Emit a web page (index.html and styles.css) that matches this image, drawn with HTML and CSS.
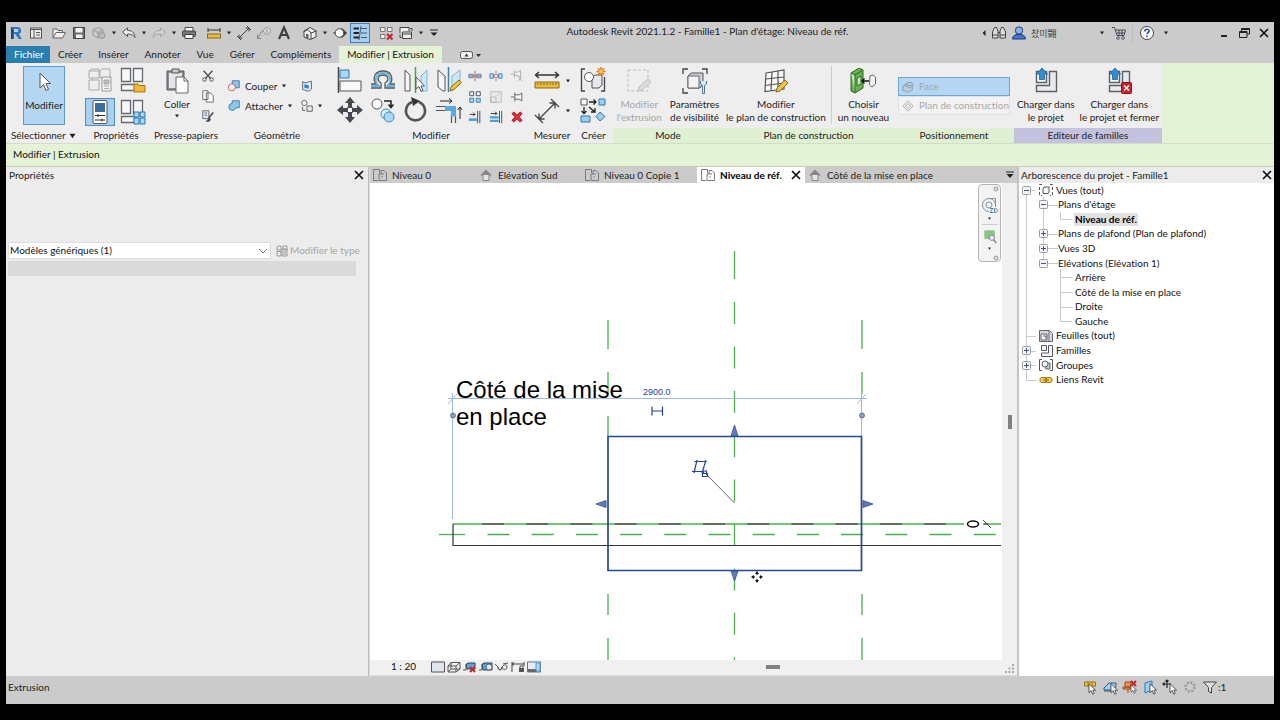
FILE: index.html
```html
<!DOCTYPE html>
<html lang="fr">
<head>
<meta charset="utf-8">
<title>Autodesk Revit 2021.1.2 - Famille1</title>
<link rel="stylesheet" href="styles.css">
</head>
<body>
<svg class="defs" aria-hidden="true">
  <symbol id="sheet" viewBox="0 0 14 12"><path d="M5 11.500H.5V.5H6.500V4M6 11.500V5h2V1.500h3l2.500 2.500v7.500zM9 7v1.500M8 5h3" fill="none" stroke="#777b80"/></symbol>
  <symbol id="house" viewBox="0 0 14 12"><path d="M7 .5L13 6.500H1z" fill="#83878b"/><path d="M4 6v5.500h6V6" fill="#e4e4e4" stroke="#83878b"/></symbol>
  <symbol id="arrow" viewBox="0 0 6 4"><path d="M1 .5h4L3 3.500z" fill="#222"/></symbol>
  <symbol id="cursor" viewBox="0 0 8 12"><path d="M1 .7v9l2.200-2 1.500 3.500 1.600-.8L4.800 7.200h2.800z" fill="#fff" stroke="#333" stroke-width=".8"/></symbol>
  <symbol id="cross" viewBox="0 0 10 10"><path d="M1 1l8 8M9 1L1 9" stroke="#111" stroke-width="1.700"/></symbol>
  <symbol id="plus" viewBox="0 0 9 9"><rect x=".5" y=".5" width="8" height="8" rx="1" fill="#f4f5f8" stroke="#9a9ea6"/><path d="M2 4.500h5M4.500 2v5" stroke="#44548a"/></symbol>
  <symbol id="minus" viewBox="0 0 9 9"><rect x=".5" y=".5" width="8" height="8" rx="1" fill="#f4f5f8" stroke="#9a9ea6"/><path d="M2 4.500h5" stroke="#44548a"/></symbol>
  <symbol id="load" viewBox="0 0 26 26"><path d="M16.500 3.500h7v20h-20v-6h13z" fill="#e8eaee" stroke="#5c6066" stroke-width="1.400"/><path d="M6 3.500H3.500v11h10v-11H12" fill="#fafafa" stroke="#5c6066" stroke-width="1.400"/><path d="M9 0l5.500 6h-3v5.500h-5V6h-3z" fill="#2f8fd6" stroke="#1c609e" stroke-width=".8"/></symbol>
</svg>
<div class="app">
  <header class="titlebar">
    <div class="quick">
      <button class="q" aria-label="Revit"><svg viewBox="0 0 16 16"><path d="M3 2h2.800v12H3z" fill="#174a7c"/><path d="M4 2h5.500a3.600 3.600 0 0 1 1.200 7L14 14h-3.300L7.300 9H6V7h3a1.500 1.500 0 0 0 0-3H4z" fill="#2a78bf"/></svg></button>
      <button class="q" aria-label="Accueil"><svg viewBox="0 0 16 16"><rect x="2.500" y="3" width="11" height="10" fill="#eee" stroke="#555"/><path d="M2 4.500h12M6 5v8M8 7.500h4M8 10h4" stroke="#555"/></svg></button>
      <button class="q gap3" aria-label="Ouvrir"><svg viewBox="0 0 16 16"><path d="M2 13V4h4l1 1.500h4.500V8M2 13l3-5.500h9.500L11.500 13z" fill="#eee" stroke="#666"/></svg></button>
      <button class="q" aria-label="Enregistrer"><svg viewBox="0 0 16 16"><path d="M2.500 2.500h11v11h-11z" fill="#666a70" stroke="#444"/><path d="M4.500 3h7v4.500h-7zM5 9.500h6.500V13H5z" fill="#f2f2f2"/></svg></button>
      <button class="q" aria-label="Synchroniser"><svg viewBox="0 0 16 16"><path d="M2 5l5-2.500L12 5v5l-5 3-5-3zM2 5l5 2.500L12 5M7 7.500V13" fill="#ccc" stroke="#999"/><circle cx="11" cy="10.500" r="3" fill="#bbb" stroke="#999"/></svg></button>
      <button class="qd" aria-label="Options"><svg><use href="#arrow"/></svg></button>
      <button class="q" aria-label="Annuler"><svg viewBox="0 0 16 16"><path d="M1.500 7l5-4v2.500c4 0 7 1.500 7.500 7-2-3-4-3.500-7.500-3.500v2.500z" fill="#eee" stroke="#555"/></svg></button>
      <button class="qd" aria-label="Liste annuler"><svg><use href="#arrow"/></svg></button>
      <button class="q" aria-label="Rétablir"><svg viewBox="0 0 16 16"><path d="M14.500 7l-5-4v2.500c-4 0-7 1.500-7.500 7 2-3 4-3.500 7.500-3.500v2.500z" fill="#d2d2d2" stroke="#a2a2a2"/></svg></button>
      <button class="qd" aria-label="Liste rétablir"><svg><use href="#arrow"/></svg></button>
      <button class="q" aria-label="Imprimer"><svg viewBox="0 0 16 16"><path d="M4 6V2.500h8V6" fill="#fff" stroke="#444"/><rect x="1.500" y="6" width="13" height="5.500" rx="1" fill="#777" stroke="#444"/><path d="M4 9.500h8v4H4z" fill="#fff" stroke="#444"/></svg></button>
      <button class="q sep" aria-label="Mesurer"><svg viewBox="0 0 16 16"><path d="M2 5h12M2 3v4M14 3v4" stroke="#333"/><rect x="1.500" y="9" width="13" height="4" fill="#eebc3a" stroke="#8d6a14"/></svg></button>
      <button class="qd" aria-label="Liste mesurer"><svg><use href="#arrow"/></svg></button>
      <button class="q" aria-label="Cote alignée"><svg viewBox="0 0 16 16"><path d="M3 13L13 3M9.500 3H13v3.500M3 9.500V13h3.500M1 11l4 4M11 1l4 4" fill="none" stroke="#444"/></svg></button>
      <button class="q" aria-label="Étiquette"><svg viewBox="0 0 16 16"><path d="M1.500 13.500L6 6M1.500 9.500v4H5M6 6h2" fill="none" stroke="#888"/><circle cx="11" cy="6" r="3.500" fill="#ddd" stroke="#999"/><path d="M11 4v4" stroke="#888"/></svg></button>
      <button class="q" aria-label="Texte"><svg viewBox="0 0 16 16"><path d="M3 14L8 2.500 13 14M5 10h6" fill="none" stroke="#3d4146" stroke-width="2.200"/></svg></button>
      <button class="q gap6" aria-label="Vue 3D"><svg viewBox="0 0 16 16"><path d="M2 6l6-3.500L14 6v6l-6 2.500L2 12z" fill="#eee" stroke="#444"/><path d="M1.500 7L6 4.500 9 8v6M9 8l5.500-2" fill="none" stroke="#444"/><path d="M4 9h2.500v4H4z" fill="#666"/></svg></button>
      <button class="qd" aria-label="Liste 3D"><svg><use href="#arrow"/></svg></button>
      <button class="q" aria-label="Coupe"><svg viewBox="0 0 16 16"><path d="M1 8h2M10 3.500L14.500 8 10 12.500z" fill="#333" stroke="#444"/><circle cx="7.500" cy="8" r="4.300" fill="#fff" stroke="#444"/></svg></button>
      <button class="q on" aria-label="Lignes fines"><svg viewBox="0 0 16 16"><path d="M1.500 3.500H7M1.500 8H7M1.500 12.500H7" stroke="#222" stroke-width="2"/><path d="M9 3.500h6M9 8h6M9 12.500h6M9 1L7 15" stroke="#245" stroke-width=".8"/></svg></button>
      <button class="q gap6" aria-label="Fermer les fenêtres"><svg viewBox="0 0 16 16"><path d="M2.500 2.500H7v4H2.500zM9.500 2.500H14v4H9.500zM2.500 9.500H7v4H2.500z" fill="#eee" stroke="#777"/><path d="M9 9l5.500 5.500M14.500 9L9 14.500" stroke="#c8232c" stroke-width="2"/></svg></button>
      <button class="q" aria-label="Changer de fenêtre"><svg viewBox="0 0 16 16"><path d="M2 8V2.500h9V6M4.500 7h9v6.500h-9zM4.500 9h9" fill="#eee" stroke="#444"/><path d="M2 9.500v3h1.500M12 3.500h2V6" fill="none" stroke="#444"/></svg></button>
      <button class="qd" aria-label="Liste fenêtres"><svg><use href="#arrow"/></svg></button>
      <button class="qd wide" aria-label="Personnaliser"><svg viewBox="0 0 8 8"><path d="M0 1h8" stroke="#222"/><path d="M.5 3.500h7L4 7z" fill="#222"/></svg></button>
    </div>
    <h1 class="title">Autodesk Revit 2021.1.2 - Famille1 - Plan d'étage: Niveau de réf.</h1>
    <div class="account">
      <button class="qd" aria-label="Réduire"><svg viewBox="0 0 6 6"><path d="M4.500 0v6L1.500 3z" fill="#222"/></svg></button>
      <button class="q" aria-label="Rechercher"><svg viewBox="0 0 16 16"><path d="M1.500 13V7l2-4.500h2L7 6v7zM14.500 13V7l-2-4.500h-2L9 6v7zM7 7.500h2M2 10h5M9 10h5" fill="#ddd" stroke="#444"/></svg></button>
      <button class="q" aria-label="Utilisateur"><svg viewBox="0 0 16 16"><circle cx="8" cy="5.500" r="3.700" fill="#8fb0e6" stroke="#1d3a86"/><path d="M1.500 14c0-3 2-4 4.500-4.500h4c2.500.5 4.500 1.500 4.500 4.500z" fill="#4a76c8" stroke="#1d3a86"/></svg></button>
      <span class="user">찼미翾</span>
      <button class="qd" aria-label="Compte"><svg><use href="#arrow"/></svg></button>
      <button class="q cart" aria-label="Boutique"><svg viewBox="0 0 16 16"><path d="M1 2.500h2.500L6 10.500h7l1.500-5.500H5M6 8h8M8 5v5M11 5v5" fill="none" stroke="#444a5a"/><circle cx="7" cy="13" r="1.300" fill="#fff" stroke="#444a5a"/><circle cx="12" cy="13" r="1.300" fill="#fff" stroke="#444a5a"/></svg></button>
      <button class="q help" aria-label="Aide"><svg viewBox="0 0 16 16"><circle cx="8" cy="8" r="6.500" fill="#fff" stroke="#444"/><path d="M5.800 6.500c0-3 4.400-3 4.400-.5 0 1.500-2.200 1.500-2.200 3.200M8 10.500v1.800" fill="none" stroke="#2453b0" stroke-width="1.600"/></svg></button>
      <button class="qd" aria-label="Liste aide"><svg><use href="#arrow"/></svg></button>
    </div>
    <div class="window">
      <button class="q" aria-label="Minimiser"><svg viewBox="0 0 16 16"><path d="M5 11h6" stroke="#111" stroke-width="1.800"/></svg></button>
      <button class="q" aria-label="Restaurer"><svg viewBox="0 0 16 16"><path d="M5.500 6V3.500h8V9H11" fill="none" stroke="#222"/><path d="M3.500 6.500h7.500v6H3.500zM3.500 7.500H11M5.500 4.500h8" fill="none" stroke="#222"/></svg></button>
      <button class="q" aria-label="Fermer"><svg viewBox="-3 -3 16 16"><use href="#cross" width="10" height="10"/></svg></button>
    </div>
  </header>

  <nav class="tabs">
    <button class="file">Fichier</button>
    <button>Créer</button>
    <button>Insérer</button>
    <button>Annoter</button>
    <button>Vue</button>
    <button>Gérer</button>
    <button>Compléments</button>
    <button class="current">Modifier | Extrusion</button>
    <button class="toggle" aria-label="Réduire le ruban"><svg viewBox="0 0 22 8"><rect x=".5" y=".5" width="12" height="7" rx="2" fill="#eee" stroke="#555"/><path d="M6.500 2.500l2 3h-4zM16 3h5l-2.500 3z" fill="#333"/></svg></button>
  </nav>

  <section class="ribbon">
    <div class="panel p-select">
      <div class="body"><button class="big on"><svg viewBox="0 0 26 26"><path d="M9 4v15l3.500-3.500 2.500 6 2.500-1-2.500-6h4.500z" fill="#fff" stroke="#555"/></svg>Modifier</button></div>
      <h2>Sélectionner <svg class="tri"><use href="#arrow"/></svg></h2>
    </div>
    <div class="panel p-props">
      <div class="body pair">
        <button class="icon" aria-label="Type"><svg viewBox="0 0 26 26"><path d="M2 4l3-2h7v9H2zM13 4l2-2h8v9H13zM2 13h10v10H2zM2 4h10M5 11v2" fill="#eee" stroke="#aaa"/><path d="M15 10h9v14h-9z" fill="#f4f4f4" stroke="#999"/><path d="M17 13h5v4h-5zM17 19h5M17 21.500h5" fill="#bbb" stroke="#aaa"/></svg></button>
        <button class="icon" aria-label="Catégorie"><svg viewBox="0 0 26 26"><path d="M1.500 1.500h9v13h-9zM13.500 1.500h9v13h-9zM1.500 17.500h13v6h-13z" fill="#f6f7f9" stroke="#666a70" stroke-width="1.300"/><path d="M14 17h4l1 1.500h6V25H14z" fill="#f0b834" stroke="#a87412"/></svg></button>
        <button class="icon on" aria-label="Propriétés"><svg viewBox="0 0 26 26"><rect x="6" y="1.500" width="14" height="23" rx="1" fill="#fff" stroke="#555"/><path d="M8 4h10v9H8z" fill="#3a6c9c"/><path d="M8 16.500h10M8 21h10M11 15v3M15 19.500v3" stroke="#333"/></svg></button>
        <button class="icon" aria-label="Types"><svg viewBox="0 0 26 26"><path d="M1.500 1.500h9v13h-9zM13.500 1.500h9v13h-9zM1.500 17.500h13v6h-13z" fill="#f6f7f9" stroke="#666a70" stroke-width="1.300"/><path d="M14 13h5v5h-5zM20 13h5v5h-5zM14 19h5v6h-5zM20 19h5v6h-5z" fill="#a9daf5" stroke="#2773ab"/></svg></button>
      </div>
      <h2>Propriétés</h2>
    </div>
    <div class="panel p-clip">
      <div class="body split">
        <button class="big"><svg viewBox="0 0 26 26"><path d="M3 3h17v19H3z" fill="#8a8e94" stroke="#55595f"/><path d="M5 5h13v15H5z" fill="#e4e6ea"/><path d="M8 1h7v4H8z" fill="#ccc" stroke="#555"/><path d="M12 9h8l4 4v12H12z" fill="#fff" stroke="#666"/><path d="M20 9v4h4" fill="none" stroke="#666"/></svg>Coller<svg class="dd"><use href="#arrow"/></svg></button>
        <div class="stack">
          <button class="small" aria-label="Couper"><svg viewBox="0 0 16 16"><path d="M3 2l8 9M13 2L5 11" stroke="#444" stroke-width="1.500"/><circle cx="4" cy="12" r="2" fill="none" stroke="#444"/><circle cx="12" cy="12" r="2" fill="none" stroke="#444"/></svg></button>
          <button class="small" aria-label="Copier"><svg viewBox="0 0 16 16"><path d="M2 2h6v10H2zM6 4.500h5l3 3V15H6z" fill="#f8f8f8" stroke="#666"/></svg></button>
          <button class="small" aria-label="Pinceau"><svg viewBox="0 0 16 16"><path d="M2 2h7v9H2zM4 4.500h3M4 7h3" fill="#dce8f4" stroke="#567"/><path d="M14 4L9 10" stroke="#555" stroke-width="2"/><path d="M9.500 9.500c-1.500 1-1 3-4.500 4.500 3 1.500 6.500 0 6-3z" fill="#444"/></svg></button>
        </div>
      </div>
      <h2>Presse-papiers</h2>
    </div>
    <div class="panel p-geo">
      <div class="body geo">
        <button class="row"><svg viewBox="0 0 16 16"><path d="M6 2h8v8H6z" fill="#8cc8ee" stroke="#3576ab"/><circle cx="5.500" cy="9.500" r="4" fill="#fff" stroke="#c44"/></svg>Couper <svg class="dd"><use href="#arrow"/></svg></button>
        <button class="small" aria-label="Diviser"><svg viewBox="0 0 16 16"><path d="M3 3l3 1.500 7-2v9l-3 2.500-7-2z" fill="#dfeefb" stroke="#556"/><path d="M5 6l5 1v4l-5-1z" fill="#2d86c9"/></svg></button>
        <button class="row"><svg viewBox="0 0 16 16"><path d="M6 2h8v8h-4a4 4 0 1 1-4-5z" fill="#8cc8ee" stroke="#3576ab"/></svg>Attacher <svg class="dd"><use href="#arrow"/></svg></button>
        <button class="small wide" aria-label="Joindre"><svg viewBox="0 0 16 16"><circle cx="5" cy="4.500" r="3" fill="#fff" stroke="#555"/><path d="M8 8h6v6H8zM3 9v4h3" fill="#eee" stroke="#555"/></svg><svg class="dd"><use href="#arrow"/></svg></button>
      </div>
      <h2>Géométrie</h2>
    </div>
    <div class="panel p-mod">
      <div class="body mod">
        <div class="four">
          <button class="icon" aria-label="Aligner"><svg viewBox="0 0 26 26"><path d="M1.500 0v26" stroke="#444" stroke-width="1.500"/><path d="M3 3h9v8H3z" fill="#a8d8f4" stroke="#2f78ab"/><path d="M3 14h21v10H3z" fill="#f8f8f8" stroke="#555"/></svg></button>
          <button class="icon" aria-label="Décaler"><svg viewBox="0 0 26 26"><path d="M25 21H15v-5c5-3 3-8-2-8s-7 5-2 8v5H1" fill="none" stroke="#555" stroke-width="1.300"/><path d="M25 17h-5c4-6 1-13-7-13S2 11 6 17H1" fill="none" stroke="#555" stroke-width="1.300"/><path d="M25 19h-8c6-5 3-13-4-13S3 14 9 19H1" fill="none" stroke="#6ab2e0" stroke-width="1.800"/></svg></button>
          <button class="icon" aria-label="Symétrie axe"><svg viewBox="0 0 26 26"><path d="M2 3l5 5v16H2z" fill="#f6f6f6" stroke="#555"/><path d="M24 3l-6 6v15h6z" fill="#c9e8f8" stroke="#85b5cf"/><path d="M12.500 0v26" stroke="#46a83c" stroke-width="1.500"/><path d="M13 10v12l3-2.500 2 5 2-1-2-4.500h3.500z" fill="#fff" stroke="#555"/></svg></button>
          <button class="icon" aria-label="Symétrie dessin"><svg viewBox="0 0 26 26"><path d="M2 3l7 6v15H7l-5-4z" fill="#f6f6f6" stroke="#555"/><path d="M24 3l-8 6v15l8-8z" fill="#c9e8f8" stroke="#85b5cf"/><path d="M12.500 0v25" stroke="#3f7fb5" stroke-width="1.500"/><path d="M14 24l1-4 8-7 2.500 2.500-7.500 7z" fill="#f1c23d" stroke="#8a671a"/></svg></button>
          <button class="icon" aria-label="Déplacer"><svg viewBox="0 0 26 26"><path d="M13 0l5 6h-3v4h-4V6H8zM13 26l5-6h-3v-4h-4v4H8zM0 13l6-5v3h4v4H6v3zM26 13l-6-5v3h-4v4h4v3z" fill="#454a50"/><path d="M10.500 10.500h5v5h-5z" fill="#fff" stroke="#454a50"/></svg></button>
          <button class="icon" aria-label="Copier"><svg viewBox="0 0 26 26"><circle cx="7" cy="7" r="5" fill="#fff" stroke="#555"/><path d="M14 4h7v6M18.500 7.500l2.500 3 2.500-3" fill="none" stroke="#222" stroke-width="1.500"/><circle cx="16" cy="17" r="5" fill="#d7effc" stroke="#3f8dbf"/><circle cx="19" cy="20" r="5" fill="#a8d8f4" stroke="#3f8dbf"/></svg></button>
          <button class="icon" aria-label="Rotation"><svg viewBox="0 0 26 26"><path d="M16 5a9.500 9.500 0 1 1-7 0" fill="none" stroke="#50545a" stroke-width="2.600"/><path d="M8 0l9 4-7 5z" fill="#333"/></svg></button>
          <button class="icon" aria-label="Ajuster"><svg viewBox="0 0 26 26"><path d="M0 9.500h11M0 13.500h11M15.500 17v9M19.500 17v9" stroke="#555" stroke-width="1.200"/><path d="M9 11.500h8.500v8" fill="none" stroke="#59aadd" stroke-width="5"/><path d="M4 4h12M13 1.500L16 4l-3 2.500M24 22V10M21.500 13L24 10l2 3" fill="none" stroke="#222"/></svg></button>
        </div>
        <div class="nine">
          <button class="small" aria-label="Scinder"><svg viewBox="0 0 16 16"><path d="M1 6h5v4H1zM10 6h5v4h-5z" fill="#aeddf6" stroke="#3d80ae"/><path d="M8 2v12M1 8h14" stroke="#c0504c"/></svg></button>
          <button class="small" aria-label="Scinder avec espace"><svg viewBox="0 0 16 16"><path d="M1 5.500h4v5H1zM11 5.500h4v5h-4z" fill="#aeddf6" stroke="#3d80ae"/><circle cx="8" cy="8" r="2" fill="#fff" stroke="#b55"/><path d="M8 2v3M8 11v3" stroke="#b55"/></svg></button>
          <button class="small" aria-label="Libérer"><svg viewBox="0 0 16 16"><path d="M5 2v8M5 3.500h4l3-2v8l-3-2H5M1 6h4M9 9l5 5M14 9l-5 5" fill="none" stroke="#aaa"/></svg></button>
          <button class="small" aria-label="Réseau"><svg viewBox="0 0 16 16"><path d="M2 2h4.500v4.500H2zM9.500 2H14v4.500H9.500z" fill="#fff" stroke="#345"/><path d="M2 9.500h4.500V14H2zM9.500 9.500H14V14H9.500z" fill="#a8d8f4" stroke="#2f78ab"/></svg></button>
          <button class="small" aria-label="Échelle"><svg viewBox="0 0 16 16"><path d="M2 2h12v12H2zM2 8h6v6H2zM9 7l3-3" fill="#eaeaea" stroke="#b5b5b5"/></svg></button>
          <button class="small" aria-label="Verrouiller"><svg viewBox="0 0 16 16"><path d="M5.500 3v10M5.500 5.500h5l3-2v9l-3-2h-5M1 8h4" fill="#f8f8f8" stroke="#555"/></svg></button>
          <button class="small" aria-label="Prolonger un"><svg viewBox="0 0 16 16"><path d="M13.500 1v14M11 1v14" stroke="#345"/><path d="M1 11h9" stroke="#4a9fd4" stroke-width="3"/><path d="M2 5h6M6 3l2 2-2 2" fill="none" stroke="#222"/></svg></button>
          <button class="small" aria-label="Prolonger plusieurs"><svg viewBox="0 0 16 16"><path d="M14.500 1v14M12 1v14" stroke="#345"/><path d="M1 8.500h10M1 12.500h10" stroke="#4a9fd4" stroke-width="2.500"/><path d="M2 4h7M7 2l2 2-2 2" fill="none" stroke="#222"/></svg></button>
          <button class="small" aria-label="Supprimer"><svg viewBox="0 0 16 16"><path d="M3 3l10 10M13 3L3 13" stroke="#a3151e" stroke-width="4"/><path d="M3.500 3.500l9 9M12.500 3.500l-9 9" stroke="#e8323c" stroke-width="2.200"/></svg></button>
        </div>
      </div>
      <h2>Modifier</h2>
    </div>
    <div class="panel p-meas">
      <div class="body meas">
        <button class="icon" aria-label="Mesurer"><svg viewBox="0 0 26 26"><path d="M2 7h22M5 4L1.500 7 5 10M21 4l3.500 3L21 10" fill="none" stroke="#333" stroke-width="1.500"/><path d="M1 14h24v6H1z" fill="#eebc3a" stroke="#8a6714"/><path d="M4 15v2M7 15v2M10 15v2M13 15v2M16 15v2M19 15v2M22 15v2" stroke="#8a6714"/></svg></button>
        <svg class="dd"><use href="#arrow"/></svg>
        <button class="icon" aria-label="Cote"><svg viewBox="0 0 26 26"><path d="M5 21L21 5M15.500 5H21v5.500M5 15.500V21h5.500M1 17l8 8M17 1l8 8" fill="none" stroke="#444" stroke-width="1.300"/></svg></button>
        <svg class="dd"><use href="#arrow"/></svg>
      </div>
      <h2>Mesurer</h2>
    </div>
    <div class="panel p-create">
      <div class="body col">
        <button class="icon" aria-label="Groupe"><svg viewBox="0 0 26 26"><path d="M5 2H1.500v22H5M21 24h3.500V10" fill="none" stroke="#444" stroke-width="1.300"/><path d="M12 11l3-3h7v10l-3 3h-7z" fill="#e6e8ec" stroke="#555"/><circle cx="9" cy="10" r="4.500" fill="#fff" stroke="#555"/><path d="M21 0v9M16.500 4.500h9M18 1.500l6 6M24 1.500l-6 6" stroke="#e6731b" stroke-width="1.500"/><circle cx="21" cy="4.500" r="2" fill="#fbd03a"/></svg></button>
        <button class="icon" aria-label="Créer similaire"><svg viewBox="0 0 26 26"><path d="M1 2h6v6H1z" fill="#fff" stroke="#555"/><path d="M19 2h6v6h-6zM1 19h9v6H1zM20 15l5 4.500-5 4.500-4-4.500z" fill="#9bd0f2" stroke="#2f78ab"/><path d="M9 5h7M13.500 2.500L16 5l-2.500 2.500M4 10v6M1.500 14L4 16.500 6.500 14M9 10l6 5M15 11v4h-4" fill="none" stroke="#222" stroke-width="1.300"/></svg></button>
      </div>
      <h2>Créer</h2>
    </div>
    <div class="panel ctx p-mode">
      <div class="body">
        <button class="big" disabled><svg viewBox="0 0 26 26"><path d="M2 2h20v21H2z" fill="#eee" stroke="#bbb" stroke-dasharray="3 2"/><path d="M12 23l1-4 9-8 3 3-9 8z" fill="#ddd" stroke="#bbb"/></svg>Modifier<br>l'extrusion</button>
        <button class="big"><svg viewBox="0 0 26 26"><path d="M1 6V1h5M20 1h5v5M1 20v5h5" fill="none" stroke="#444" stroke-width="1.300"/><path d="M6 8l3-3h12v11l-3 4H6z" fill="#ccd0d6" stroke="#555"/><path d="M6 8h11v12H6z" fill="#f2f3f5" stroke="#666"/><path d="M18.500 13v3l2 1.500v8h2v-8l2-1.500v-3" fill="#dcecf8" stroke="#4c7496"/></svg>Paramètres<br>de visibilité</button>
      </div>
      <h2>Mode</h2>
    </div>
    <div class="panel ctx p-plane">
      <div class="body">
        <button class="big"><svg viewBox="0 0 26 26"><path d="M3 5l18-3v19L2 23.500zM9 4L8 22.500M15 3v19M3 11l18-2M2 17.500l19-2.500" fill="#fafafa" stroke="#50545a" stroke-width="1.200"/><path d="M13 24l1-4 8-8 3 3-8 8z" fill="#f1c23d" stroke="#8a671a"/></svg>Modifier<br>le plan de construction</button>
        <button class="big line"><svg viewBox="0 0 26 26"><path d="M1 5l8-5 4 2v18l-8 5-4-2z" fill="#67b152" stroke="#2c6b20"/><path d="M1 5l4 2v18M5 7l8-5M7 10l4-2v8l-4 2z" fill="#c4e6b6" stroke="#2c6b20"/><path d="M20 8l3-1 2.500 2v7L22 19l-2.500-2z" fill="#f5f5f5" stroke="#666"/><path d="M19 13h-7M14.500 10.500L12 13l2.500 2.500" fill="none" stroke="#111" stroke-width="1.400"/></svg>Choisir<br>un nouveau</button>
      </div>
      <h2>Plan de construction</h2>
    </div>
    <div class="panel ctx p-pos">
      <div class="body choice">
        <button class="opt on" disabled><svg viewBox="0 0 16 16"><path d="M2 7l4-2 7 2v4l-4 3-7-2zM4 6l3-3h5l2 3-3 3z" fill="#b8cfe0" stroke="#8296a6"/></svg>Face</button>
        <button class="opt" disabled><svg viewBox="0 0 16 16"><path d="M8 2l6 6-6 6-6-6zM8 5l3 3-3 3-3-3z" fill="#eee" stroke="#aaa"/></svg>Plan de construction</button>
      </div>
      <h2>Positionnement</h2>
    </div>
    <div class="panel fam p-fam">
      <div class="body">
        <button class="big"><svg><use href="#load"/></svg>Charger dans<br>le projet</button>
        <button class="big"><svg viewBox="0 0 26 26"><use href="#load" width="26" height="26"/><rect x="15.500" y="14.500" width="10" height="11" rx="1" fill="#d3202c" stroke="#8d1119"/><path d="M18 17.500l5 5M23 17.500l-5 5" stroke="#fff" stroke-width="1.500"/></svg>Charger dans<br>le projet et fermer</button>
      </div>
      <h2>Editeur de familles</h2>
    </div>
  </section>

  <div class="options">Modifier | Extrusion</div>

  <div class="dock">
    <aside class="props">
      <header class="head"><h2>Propriétés</h2><button aria-label="Fermer propriétés"><svg><use href="#cross"/></svg></button></header>
      <div class="preview"></div>
      <div class="typerow">
        <select aria-label="Catégorie"><option>Modèles génériques (1)</option></select>
        <button class="edit" disabled><svg viewBox="0 0 12 12"><path d="M1 2l1-1h3v4H1zM7 1h4v4H7zM1 6.500h4V11H1zM6 4h5v7H6zM7 7h3M7 9h3" fill="none" stroke="#999"/></svg>Modifier le type</button>
      </div>
      <div class="group"></div>
    </aside>

    <main class="view">
      <nav class="viewtabs">
        <button><svg><use href="#sheet"/></svg>Niveau 0</button>
        <button><svg><use href="#house"/></svg>Elévation Sud</button>
        <button class="mid"><svg><use href="#sheet"/></svg>Niveau 0 Copie 1</button>
        <button class="active"><svg><use href="#sheet"/></svg>Niveau de réf.<svg class="x"><use href="#cross"/></svg></button>
        <button class="last"><svg><use href="#house"/></svg>Côté de la mise en place</button>
        <button class="more" aria-label="Autres vues"><svg viewBox="0 0 8 8"><path d="M0 1h8" stroke="#222"/><path d="M.5 3h7L4 7z" fill="#222"/></svg></button>
      </nav>
      <div class="stage">
        <div class="canvas">
          <svg class="drawing" viewBox="370 183 632 477" preserveAspectRatio="xMinYMin meet" role="img" aria-label="Plan du niveau de référence">
            <g fill="none" stroke="#4cb050" stroke-width="1.300">
              <path d="M734.500 251v28M608 320v29M608 372v22M608 416v21M608 594v21M608 638v23M862 320v29M862 372v22M862 594v21M862 638v23"/>
              <path d="M734.500 302V661" stroke-dasharray="22 22.400"/>
              <path d="M439 534.500h26"/><path d="M487.500 534.500H996" stroke-dasharray="22 22.200"/>
              <path d="M453 524H964M984 524h17"/>
            </g>
            <path d="M482 524H964" stroke="#5b5258" stroke-width="1.500" stroke-dasharray="22 22.200"/>
            <path d="M1001 545.500H453V524" fill="none" stroke="#333" stroke-width="1.200"/>
            <path d="M448 398.500H867M452.500 393V519M861.500 393V436M448 404l9-10M857 404l9-10" fill="none" stroke="#9db9ea"/>
            <g fill="#8d9bbd" stroke="#6777a3"><circle cx="453" cy="415.500" r="2.500"/><circle cx="862" cy="415.500" r="2.500"/></g>
            <path d="M608 436.500H861.500V570.500H608z" fill="none" stroke="#24489a" stroke-width="1.700"/>
            <g fill="#5f7bbb" stroke="#34508e" stroke-width=".8"><path d="M734.500 425l3.500 11h-7zM734.500 581l3.500-10h-7zM596 504l10-3.500v7zM873 504l-10-3.500v7z"/></g>
            <path d="M706 474l28.500 29" stroke="#666"/>
            <g fill="none" stroke="#24449c" stroke-width="1.200"><path d="M694.500 461.500h12M692 471.500h12M697 460l-3 13M706 460l-4 13M702.500 473.500h5v3h-5zM703.500 473v-2h3v2"/><path d="M652 406.500v9M662.500 406.500v9M652 411h10.500"/></g>
            <g class="dimension"><text x="643" y="395">2900.0</text></g>
            <g class="label"><text x="456" y="398">Côté de la mise</text><text x="456" y="425">en place</text></g>
            <ellipse cx="973" cy="524" rx="5.500" ry="3" fill="#fff" stroke="#111" stroke-width="1.600"/>
            <path d="M983 520l8 8M983 524h5" stroke="#444"/>
            <g fill="#111"><path d="M757 571l2 3h-4zM757 583l2-3h-4zM751 577l3-2v4zM763 577l-3-2v4z"/></g><path d="M757 573v8M753 577h8" stroke="#111" stroke-dasharray="2 4"/>
          </svg>
          <div class="navbar">
            <svg class="dot" viewBox="0 0 6 6"><circle cx="3" cy="3" r="2" fill="#ddd" stroke="#999"/></svg>
            <button aria-label="Roue de navigation"><svg viewBox="0 0 18 18"><path d="M8 15.500A6.500 6.500 0 1 1 14.500 9V2.500H8.500M14.500 9v2" fill="#eef2f5" stroke="#8095a6"/><circle cx="8" cy="9" r="3" fill="none" stroke="#8095a6"/><path d="M9 12.500h3l-3 4h3.500M13.500 12.500v4c4 0 4-4 0-4z" fill="none" stroke="#5b7fa0"/></svg></button>
            <svg class="dd"><use href="#arrow"/></svg>
            <button class="zoom" aria-label="Zoom région"><svg viewBox="0 0 18 18"><path d="M3 3h11v9H3z" fill="#8cc487" stroke="#76b071" stroke-dasharray="1 1"/><circle cx="11" cy="11" r="3" fill="#eef" stroke="#778"/><path d="M13 13l3 4" stroke="#778" stroke-width="1.500"/></svg></button>
            <svg class="dd"><use href="#arrow"/></svg>
            <svg class="dot" viewBox="0 0 6 6"><circle cx="3" cy="3" r="2" fill="#ddd" stroke="#999"/></svg>
          </div>
        </div>
        <div class="vscroll"><span class="thumb"></span></div>
      </div>
      <div class="viewbar">
        <button class="scale">1 : 20</button>
        <button aria-label="Niveau de détail"><svg viewBox="0 0 14 12"><path d="M.5 1h13v10H.5z" fill="#dfe5ee" stroke="#555"/></svg></button>
        <button aria-label="Style visuel"><svg viewBox="0 0 14 12"><path d="M1 5h8v6H1zM4 1.500h9V8H4zM1 5l3-3.500M9 5l4-3.500M9 11l4-3M1 11l3-3" fill="none" stroke="#555"/></svg></button>
        <button aria-label="Cadrage"><svg viewBox="0 0 14 12"><path d="M0 9h3V3h9" fill="none" stroke="#456"/><path d="M3 4l2-2h7v6H4z" fill="#5aa4d9" stroke="#345"/><path d="M7 6l5 5M12 6l-5 5" stroke="#c8232c" stroke-width="2"/></svg></button>
        <button aria-label="Zone cadrée"><svg viewBox="0 0 14 12"><path d="M0 9h3V3h9" fill="none" stroke="#456"/><path d="M3 4l2-2h8v7H4z" fill="#5aa4d9" stroke="#345"/><circle cx="10" cy="6" r="3" fill="#dfeffc" stroke="#567"/></svg></button>
        <button aria-label="Masquer"><svg viewBox="0 0 14 12"><path d="M0 3l3 3c1 4 4 4 4 0 1 4 5 3 5 0 0-3-3-3-5 0C6 9 3 10 3 6M8 3l5-1" fill="none" stroke="#555"/></svg></button>
        <button aria-label="Contraintes"><svg viewBox="0 0 14 12"><path d="M1 1v10M1 3h12M13 1v4M3 1.500l-2 1.500 2 1.500" fill="none" stroke="#444"/><path d="M8 7h5v4H8z" fill="#555"/><path d="M9 7V5h3v2" fill="none" stroke="#555"/></svg></button>
        <button aria-label="Prévisualiser"><svg viewBox="0 0 14 12"><path d="M.5 1h13v10H.5z" fill="#e8edf2" stroke="#678"/><path d="M1 8h9v3H1z" fill="#667"/><path d="M9 2h4v8H9z" fill="#a8d8f4" stroke="#59c"/></svg></button>
        <span class="thumb flat"></span>
        <svg class="grip" viewBox="0 0 9 9"><path d="M7 0h2v2H7zM7 3.500h2v2H7zM3.500 3.500h2v2h-2zM7 7h2v2H7zM3.500 7h2v2h-2zM0 7h2v2H0z" fill="#aaa"/></svg>
      </div>
    </main>

    <aside class="browser">
      <header class="head"><h2>Arborescence du projet - Famille1</h2><button aria-label="Fermer arborescence"><svg><use href="#cross"/></svg></button></header>
      <div class="treebox">
        <svg class="guides" viewBox="0 0 60 204"><path d="M7.500 12V197.500H17M7.500 7.500h9M24.500 14V80M25 22.500h14M25 51.500h14M25 65.500h14M25 80.500h14M41.500 29v7.500h12M41.500 86v52.500h12M42 94.500h12M42 109.500h12M42 124.500h12M8 153.500h9M8 168.500h9M8 182.500h9" fill="none" stroke="#c9c9c9"/></svg>
        <ul class="tree">
          <li><svg class="tg"><use href="#minus"/></svg><svg class="ti" viewBox="0 0 14 12"><path d="M3 .5H.5v11H3M11 .5h2.500v11H11" fill="#fff" stroke="#555" stroke-dasharray="3 2"/><path d="M4 5l1-2h5v5l-1 1.500H4z" fill="#fff" stroke="#555"/></svg><span>Vues (tout)</span></li>
          <li class="l1"><svg class="tg"><use href="#minus"/></svg><span>Plans d'étage</span></li>
          <li class="l2"><span class="sel">Niveau de réf.</span></li>
          <li class="l1"><svg class="tg"><use href="#plus"/></svg><span>Plans de plafond (Plan de plafond)</span></li>
          <li class="l1"><svg class="tg"><use href="#plus"/></svg><span>Vues 3D</span></li>
          <li class="l1"><svg class="tg"><use href="#minus"/></svg><span>Elévations (Elévation 1)</span></li>
          <li class="l2"><span>Arrière</span></li>
          <li class="l2"><span>Côté de la mise en place</span></li>
          <li class="l2"><span>Droite</span></li>
          <li class="l2"><span>Gauche</span></li>
          <li><i class="tg"></i><svg class="ti" viewBox="0 0 14 12"><path d="M.5.5h10l3 3v8H.5z" fill="#d8dbe0" stroke="#666"/><path d="M2 4h6v6H2zM10 1v10M4 6h3v3" fill="#f5f5f5" stroke="#667"/></svg><span>Feuilles (tout)</span></li>
          <li><svg class="tg"><use href="#plus"/></svg><svg class="ti" viewBox="0 0 14 12"><path d="M2.500.5h5v5h-5zM9.500.5h4v11H2.500V8h7z" fill="#f3f4f6" stroke="#555a66"/></svg><span>Familles</span></li>
          <li><svg class="tg"><use href="#plus"/></svg><svg class="ti" viewBox="0 0 14 12"><path d="M3 .5H.5v11H3M11 .5h2.500v11H11" fill="none" stroke="#555"/><path d="M6 5l1-1h4v6H7z" fill="#bcc" stroke="#567"/><circle cx="6" cy="5" r="3" fill="#eee" stroke="#567"/></svg><span>Groupes</span></li>
          <li><i class="tg"></i><svg class="ti" viewBox="0 0 14 12"><path d="M2.500 3.500h4v5h-4c-2 0-2-5 0-5zM11.500 3.500h-4v5h4c2 0 2-5 0-5zM4 6h6" fill="#f2cd52" stroke="#9c7413"/></svg><span>Liens Revit</span></li>
        </ul>
      </div>
    </aside>
  </div>

  <footer class="status">
    <span>Extrusion</span>
    <div class="filters">
      <button aria-label="Sélection liens"><svg viewBox="0 0 16 16"><path d="M2.500 3h11v4h-11z" fill="#f0c93c" stroke="#8f7318"/><path d="M6 3v4M10 3v4" stroke="#8f7318"/><use href="#cursor" x="6" y="4" width="8" height="12"/></svg></button>
      <button aria-label="Sélection calque"><svg viewBox="0 0 16 16"><path d="M2 9l5-5h7v4l-4 3H2zM2 12h8" fill="#9bd0f2" stroke="#357"/><use href="#cursor" x="8" y="4" width="8" height="12"/></svg></button>
      <button aria-label="Sélection verrou"><svg viewBox="0 0 16 16"><path d="M3 3h6v5H3zM1 8h10v2H1zM6 10v4" fill="#ec9458" stroke="#9b4a1a"/><path d="M9 2l5 5M14 2L9 7" stroke="#c8232c" stroke-width="2"/><use href="#cursor" x="8" y="5" width="7" height="10"/></svg></button>
      <button aria-label="Sélection face"><svg viewBox="0 0 16 16"><path d="M3 4l7-2v9l-7 3z" fill="#9bd0f2" stroke="#2f78ab"/><use href="#cursor" x="7" y="4" width="8" height="12"/></svg></button>
      <button aria-label="Déplacer sélection"><svg viewBox="0 0 16 16"><path d="M5 1v8M1 5h8M3.500 2.500L5 1l1.500 1.500M2.500 3.500L1 5l1.500 1.500" fill="none" stroke="#222" stroke-width="1.200"/><use href="#cursor" x="7" y="4" width="8" height="12"/></svg></button>
      <button aria-label="Processus"><svg viewBox="0 0 16 16"><circle cx="8" cy="8" r="4.500" fill="none" stroke="#999" stroke-width="2.500" stroke-dasharray="2 1.500"/></svg></button>
      <button class="count"><svg viewBox="0 0 16 16"><path d="M1.500 3h13L9.500 8.500V14l-3-1.500v-4z" fill="#dadde2" stroke="#444"/></svg>:1</button>
    </div>
  </footer>
</div>
</body>
</html>
```
FILE: styles.css
```css
* { box-sizing: border-box; }
body {
  margin: 0;
  padding: 22px 6px 16px;
  min-height: 100vh;
  display: flex;
  background: #000;
  color: #222;
  font: 10px/13px Lato, "Open Sans", "Noto Sans CJK KR", sans-serif;
  font-variant-ligatures: none;
}
button, select { font: inherit; font-variant-ligatures: none; color: inherit; border: 0; padding: 0; background: none; }
h1, h2 { margin: 0; font: inherit; font-variant-ligatures: none; }
svg { display: block; flex: none; }
.defs { position: absolute; width: 0; height: 0; }
.app { flex: 1; min-width: 0; display: flex; flex-direction: column; background: #ececec; }

.titlebar { display: flex; align-items: center; height: 24px; padding-bottom: 2px; background: #cbcbcb; }
.quick, .account, .window { display: flex; align-items: center; }
.q { width: 20px; height: 20px; display: grid; place-items: center; }
.q svg { width: 16px; height: 16px; }
.q.on { background: #a9cdec; border: 1px solid #3f7fb5; }
.qd { width: 10px; height: 20px; display: grid; place-items: center; }
.qd svg { width: 6px; height: 4px; }
.qd.wide { width: 16px; }
.qd.wide svg { width: 8px; height: 8px; }
.gap3 { margin-left: 3px; }
.gap6 { margin-left: 6px; }
.sep { margin-left: 5px; }
.title { flex: 1; text-align: center; white-space: nowrap; padding: 0 6px 4px 0; }
.account .qd:first-child svg { height: 6px; }
.user { width: 68px; padding-left: 2px; font-size: 9px; color: #444; }
.cart { margin-left: 2px; }
.help { margin-left: 3px; border-left: 1px solid #bcbcbc; width: 29px; }
.window { margin-left: 43px; }

.tabs { display: flex; height: 17px; background: #cbcbcb; }
.tabs button { padding: 0 8px; }
.tabs .file { width: 44px; color: #fff; background: #2a7fb0; }
.tabs .current { background: #e4f2d6; color: #111; }
.tabs .toggle { margin-left: 10px; }
.toggle svg { width: 22px; height: 8px; }

.ribbon { display: flex; background: #e4f2d6; border-bottom: 1px solid #d2dec8; }
.panel { display: flex; flex-direction: column; background: #eee; }
.panel h2 { height: 15px; line-height: 15px; text-align: center; white-space: nowrap; }
.panel .body { height: 65px; padding-top: 3px; display: flex; justify-content: center; }
.ctx h2 { background: #e0f0d2; }
.fam h2 { background: #c4c2de; }
.tri { display: inline-block; width: 9px; height: 6px; }
.dd { width: 6px; height: 4px; }
.p-select { width: 76px; }
.p-props { width: 68px; }
.p-clip { width: 72px; }
.p-geo { width: 110px; }
.p-mod { width: 198px; }
.p-meas { width: 44px; }
.p-create { width: 39px; }
.p-mode { width: 110px; }
.p-plane { width: 171px; }
.p-pos { width: 120px; }
.p-fam { width: 148px; }
.big { display: block; align-self: flex-start; white-space: nowrap; text-align: center; }
.big svg { width: 26px; height: 26px; margin: 2px auto 4px; }
.big .dd { width: 6px; height: 4px; margin: 3px auto 0; }
.big:disabled, .opt:disabled, .edit:disabled { color: #a6a6a6; }
.big.on { width: 42px; height: 59px; padding-bottom: 14px; background: #b3d6f2; border: 1px solid #5b9bd0; }
.icon { width: 30px; height: 28px; display: grid; place-items: center; }
.icon svg { width: 26px; height: 26px; }
.icon.on { background: #a9d0f0; border: 1px solid #4a8cc4; }
.small { width: 20px; height: 20px; display: grid; place-items: center; }
.small svg { width: 14px; height: 14px; }
.panel .pair { display: grid; grid-template-columns: 30px 30px; gap: 2px 3px; }
.panel .split { gap: 8px; justify-content: flex-end; padding-right: 4px; }
.stack { display: flex; flex-direction: column; }
.panel .geo { display: grid; grid-template-columns: 70px 30px; grid-template-rows: 20px 20px; padding-top: 13px; align-content: start; }
.row { display: flex; align-items: center; gap: 4px; white-space: nowrap; }
.row svg { width: 14px; height: 14px; }
.row .dd, .small .dd { width: 6px; height: 4px; }
.small.wide { width: 30px; display: flex; align-items: center; gap: 3px; padding-left: 3px; }
.four { display: grid; grid-template-columns: repeat(4, 33px); grid-template-rows: 30px 30px; }
.nine { display: grid; grid-template-columns: repeat(3, 21px); margin-left: -2px; }
.panel .meas { display: grid; grid-template-columns: 30px 8px; grid-template-rows: 30px 30px; align-items: center; gap: 0 3px; }
.panel .col { flex-direction: column; justify-content: flex-start; gap: 2px; align-items: flex-start; padding-left: 4px; }
.p-mode .body { gap: 8px; }
.panel.p-plane .body { justify-content: flex-start; gap: 5px; padding-left: 3px; }
.p-plane .line { border-left: 1px solid #ccc; padding-left: 6px; height: 58px; }
.p-fam .body { gap: 5px; }
.panel .choice { flex-direction: column; justify-content: flex-start; padding: 14px 4px 0; }
.opt { height: 19px; display: flex; align-items: center; gap: 4px; padding-left: 2px; border: 1px solid #e0e0e0; background: #f3f3f3; white-space: nowrap; }
.opt svg { width: 14px; height: 14px; }
.opt.on { background: #b5d6f2; border-color: #6ba6d6; }

.options { height: 23px; padding: 4px 7px; background: #e4f2d6; border-bottom: 1px solid #c6ccc0; color: #111; }

.dock { flex: 1; display: flex; min-height: 0; }
.head { height: 16px; display: flex; align-items: center; justify-content: space-between; padding: 0 4px 0 3px; }
.head svg { width: 10px; height: 10px; }
.props { width: 363px; border-right: 1px solid #bbb; background: #ececec; }
.preview { height: 59px; }
.typerow { display: flex; align-items: center; gap: 5px; padding-left: 2px; }
select { width: 263px; height: 17px; padding: 0 4px 0 1px; color: #111; border: 1px solid #dcdcdc; appearance: none;
  background: linear-gradient(45deg, transparent 44%, #777 44% 58%, transparent 58%) right 7px center / 4px 4px no-repeat,
    linear-gradient(-45deg, transparent 44%, #777 44% 58%, transparent 58%) right 3px center / 4px 4px no-repeat, #fff; }
.edit { display: flex; align-items: center; gap: 2px; white-space: nowrap; }
.edit svg { width: 12px; height: 12px; }
.group { height: 15px; margin: 2px 12px 0 2px; background: #dadada; }

.view { flex: 1; min-width: 0; display: flex; flex-direction: column; border-left: 1px solid #ddd; }
.viewtabs { display: flex; height: 16px; background: #cbcbcb; }
.viewtabs button { width: 106px; display: flex; align-items: center; gap: 5px; padding-left: 3px; white-space: nowrap; }
.viewtabs svg { width: 14px; height: 12px; }
.viewtabs .mid { width: 115px; }
.viewtabs .active { width: 108px; background: #fff; font-weight: 700; color: #000; padding-left: 4px; }
.viewtabs .x { width: 10px; height: 10px; margin-left: auto; margin-right: 4px; }
.viewtabs .last { width: auto; padding-left: 3px; }
.viewtabs .more { width: 14px; margin-left: auto; }
.viewtabs .more svg { width: 8px; height: 8px; }
.stage { flex: 1; display: flex; min-height: 0; }
.canvas { position: relative; flex: 1; min-width: 0; background: #fff; }
.drawing { width: 100%; height: 100%; }
.label { font: 24px "Liberation Sans", Arial, sans-serif; fill: #000; }
.dimension { font: 9px "Liberation Sans", Arial, sans-serif; fill: #24449c; }
.navbar { position: absolute; top: 1px; right: 1px; width: 23px; height: 78px; display: flex; flex-direction: column; align-items: center; border: 1px solid #b4b4b4; border-radius: 4px; background: #f3f3f3; }
.navbar svg { width: 18px; height: 18px; }
.navbar .dot { width: 6px; height: 6px; margin: 1px; align-self: flex-end; }
.navbar .dd { width: 5px; height: 3px; margin: 3px 0 4px; }
.navbar button { padding-top: 3px; }
.navbar .zoom { border-top: 1px solid #ccc; }
.navbar .zoom svg { width: 16px; height: 16px; }
.vscroll { width: 15px; display: grid; place-items: center; background: #f0f0f0; }
.thumb { width: 4px; height: 14px; background: #808080; }
.viewbar { display: flex; align-items: center; gap: 2px; height: 16px; padding: 0 0 2px 21px; background: #f0f0f0; border-bottom: 1px solid #ddd; }
.viewbar .scale { width: 24px; margin-right: 14px; color: #111; white-space: nowrap; }
.viewbar svg { width: 14px; height: 12px; }
.thumb.flat { width: 14px; height: 4px; margin: 0 auto; }
.viewbar .grip { width: 9px; height: 9px; margin-right: 3px; align-self: flex-end; }

.browser { width: 257px; border-left: 2px solid #c4c4c4; background: #fff; }
.browser .head { background: #ececec; padding-left: 2px; padding-right: 2px; }
.treebox { position: relative; height: 204px; }
.guides { position: absolute; inset: 0 auto auto 0; width: 60px; height: 204px; }
.tree { position: relative; margin: 0; padding: 0 0 0 3px; height: 204px; list-style: none; display: grid; grid-auto-rows: 1fr; color: #111; }
.tree li { display: flex; align-items: center; white-space: nowrap; }
.tg { width: 9px; height: 9px; margin-right: 8px; }
.ti { width: 14px; height: 12px; margin-right: 3px; background: #fff; }
.tree .l1 { padding-left: 17px; }
.l1 .tg { margin-right: 10px; }
.tree .l2 { padding-left: 53px; }
.sel { margin-left: -1px; padding: 0 1px; background: #e0e0e0; font-weight: 700; color: #000; }

.status { display: flex; align-items: center; justify-content: space-between; height: 28px; padding: 0 48px 6px 2px; background: #cbcbcb; }
.filters { display: flex; gap: 4px; }
.filters button { width: 16px; height: 16px; }
.filters svg { width: 16px; height: 16px; }
.filters .count { width: 24px; display: flex; align-items: center; }
```
